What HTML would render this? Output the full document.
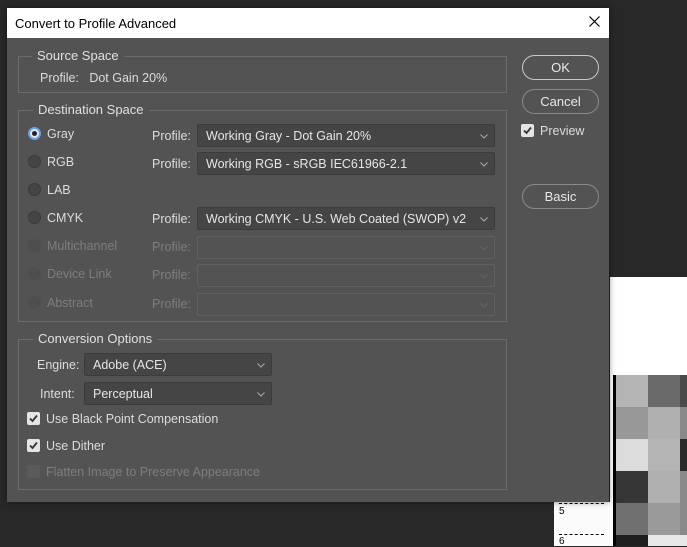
<!DOCTYPE html>
<html><head><style>
*{margin:0;padding:0;box-sizing:border-box}
body{width:687px;height:546px;background:#282828;position:relative;overflow:hidden;font-family:"Liberation Sans",sans-serif;font-size:12.5px;color:#dcdcdc}
.a{position:absolute;white-space:nowrap}
.grp{position:absolute;border:1px solid #6b6b6b}
.lg{position:absolute;background:#535353;padding:0 5px;color:#e0e0e0;font-size:13px}
.dd{position:absolute;height:23px;background:#454545;border:1px solid #3c3c3c;border-radius:2px;color:#e6e6e6;padding:4px 0 0 8px;font-size:12.5px}
.dd.dis{background:#535353;border-color:#616161}
.dd svg{position:absolute;right:6px;top:9px}
.rad{position:absolute;width:13px;height:13px;border-radius:50%;background:#454545;border:1px solid #3a3a3a}
.rad.dis{background:#4e4e4e;border-color:#4e4e4e}
.cb{position:absolute;width:13px;height:13px;border-radius:2px;background:#e4e4e4}
.cb svg{position:absolute;left:2px;top:2px}
.btn{position:absolute;width:77px;height:25px;border:1.5px solid #8a8a8a;border-radius:13px;text-align:center;line-height:23px;font-size:13px;color:#e8e8e8}
.dim{color:#7e7e7e}
</style></head><body>
<div class="a" style="left:610px;top:277px;width:77px;height:269px;background:#fff"></div>
<div class="a" style="left:613px;top:375px;width:3px;height:171px;background:#000"></div>
<div class="a" style="left:616px;top:375px;width:71px;height:171px;display:grid;grid-template-columns:32px 32px 7px;grid-template-rows:32px 32px 32px 32px 32px 11px">
<div style="background:#b4b4b4"></div><div style="background:#6a6a6a"></div><div style="background:#4a4a4a"></div>
<div style="background:#989898"></div><div style="background:#b0b0b0"></div><div style="background:#8a8a8a"></div>
<div style="background:#dcdcdc"></div><div style="background:#b4b4b4"></div><div style="background:#2a2a2a"></div>
<div style="background:#363636"></div><div style="background:#b0b0b0"></div><div style="background:#8a8a8a"></div>
<div style="background:#707070"></div><div style="background:#9a9a9a"></div><div style="background:#8a8a8a"></div>
<div style="background:#1e1e1e"></div><div style="background:#e8e8e8"></div><div style="background:#e8e8e8"></div>
</div>
<div class="a" style="left:554px;top:502px;width:59px;height:44px;background:#fbfbfb"></div>
<div class="a" style="left:559px;top:503px;width:45px;border-top:1px dashed #000"></div>
<div class="a" style="left:559px;top:506px;font-size:10px;color:#000">5</div>
<div class="a" style="left:559px;top:534px;width:45px;border-top:1px dashed #000"></div>
<div class="a" style="left:559px;top:536px;font-size:10px;color:#000">6</div>

<div class="a" style="left:7px;top:8px;width:602px;height:494px;background:#535353;box-shadow:0 0 6px rgba(0,0,0,.5)"></div>
<div class="a" style="left:7px;top:8px;width:602px;height:30px;background:#fff;color:#000;font-size:13px;padding:8px 0 0 8px">Convert to Profile Advanced</div>
<svg class="a" style="left:589px;top:16px" width="11" height="11"><path d="M0.5 0.5L10.5 10.5M10.5 0.5L0.5 10.5" stroke="#000" stroke-width="1.2"/></svg>

<div class="grp" style="left:18px;top:56px;width:489px;height:37px"></div>
<div class="lg" style="left:32px;top:48px">Source Space</div>
<div class="a" style="left:40px;top:71px">Profile:&nbsp;&nbsp;&nbsp;Dot Gain 20%</div>

<div class="grp" style="left:18px;top:110px;width:489px;height:212px"></div>
<div class="lg" style="left:33px;top:102px">Destination Space</div>

<div class="rad" style="left:28px;top:127px;background:#e8e8e8;border:2px solid #6aa0e6"></div>
<div class="a" style="left:32px;top:131px;width:5px;height:5px;border-radius:50%;background:#222"></div>
<div class="a" style="left:47px;top:127px">Gray</div>
<div class="rad" style="left:28px;top:155px"></div><div class="a" style="left:47px;top:155px">RGB</div>
<div class="rad" style="left:28px;top:183px"></div><div class="a" style="left:47px;top:183px">LAB</div>
<div class="rad" style="left:28px;top:211px"></div><div class="a" style="left:47px;top:211px">CMYK</div>
<div class="rad dis" style="left:28px;top:239px"></div><div class="a dim" style="left:47px;top:239px">Multichannel</div>
<div class="rad dis" style="left:28px;top:267px"></div><div class="a dim" style="left:47px;top:267px">Device Link</div>
<div class="rad dis" style="left:28px;top:296px"></div><div class="a dim" style="left:47px;top:296px">Abstract</div>

<div class="a" style="left:152px;top:129px">Profile:</div>
<div class="a" style="left:152px;top:157px">Profile:</div>
<div class="a" style="left:152px;top:212px">Profile:</div>
<div class="a dim" style="left:152px;top:240px">Profile:</div>
<div class="a dim" style="left:152px;top:268px">Profile:</div>
<div class="a dim" style="left:152px;top:297px">Profile:</div>

<div class="dd" style="left:197px;top:124px;width:298px">Working Gray - Dot Gain 20%<svg width="8" height="5"><path d="M0.5 0.5L4 4L7.5 0.5" stroke="#aaa" fill="none"/></svg></div>
<div class="dd" style="left:197px;top:152px;width:298px">Working RGB - sRGB IEC61966-2.1<svg width="8" height="5"><path d="M0.5 0.5L4 4L7.5 0.5" stroke="#aaa" fill="none"/></svg></div>
<div class="dd" style="left:197px;top:207px;width:298px">Working CMYK - U.S. Web Coated (SWOP) v2<svg width="8" height="5"><path d="M0.5 0.5L4 4L7.5 0.5" stroke="#aaa" fill="none"/></svg></div>
<div class="dd dis" style="left:197px;top:236px;width:298px"><svg width="8" height="5"><path d="M0.5 0.5L4 4L7.5 0.5" stroke="#666" fill="none"/></svg></div>
<div class="dd dis" style="left:197px;top:264px;width:298px"><svg width="8" height="5"><path d="M0.5 0.5L4 4L7.5 0.5" stroke="#666" fill="none"/></svg></div>
<div class="dd dis" style="left:197px;top:293px;width:298px"><svg width="8" height="5"><path d="M0.5 0.5L4 4L7.5 0.5" stroke="#666" fill="none"/></svg></div>

<div class="grp" style="left:18px;top:339px;width:489px;height:151px"></div>
<div class="lg" style="left:33px;top:331px">Conversion Options</div>
<div class="a" style="left:37px;top:358px">Engine:</div>
<div class="a" style="left:40px;top:387px">Intent:</div>
<div class="dd" style="left:84px;top:353px;width:188px">Adobe (ACE)<svg width="8" height="5"><path d="M0.5 0.5L4 4L7.5 0.5" stroke="#aaa" fill="none"/></svg></div>
<div class="dd" style="left:84px;top:382px;width:188px">Perceptual<svg width="8" height="5"><path d="M0.5 0.5L4 4L7.5 0.5" stroke="#aaa" fill="none"/></svg></div>

<div class="cb" style="left:27px;top:412px"><svg width="9" height="9"><path d="M1 4.5L3.5 7L8 1.5" stroke="#333" stroke-width="1.8" fill="none"/></svg></div>
<div class="a" style="left:46px;top:412px">Use Black Point Compensation</div>
<div class="cb" style="left:27px;top:439px"><svg width="9" height="9"><path d="M1 4.5L3.5 7L8 1.5" stroke="#333" stroke-width="1.8" fill="none"/></svg></div>
<div class="a" style="left:46px;top:439px">Use Dither</div>
<div class="cb" style="left:27px;top:465px;background:#5a5a5a"></div>
<div class="a dim" style="left:46px;top:465px">Flatten Image to Preserve Appearance</div>

<div class="btn" style="left:522px;top:55px;border-color:#c8c8c8">OK</div>
<div class="btn" style="left:522px;top:89px">Cancel</div>
<div class="cb" style="left:521px;top:124px"><svg width="9" height="9"><path d="M1 4.5L3.5 7L8 1.5" stroke="#333" stroke-width="1.8" fill="none"/></svg></div>
<div class="a" style="left:540px;top:124px">Preview</div>
<div class="btn" style="left:522px;top:184px">Basic</div>
</body></html>
